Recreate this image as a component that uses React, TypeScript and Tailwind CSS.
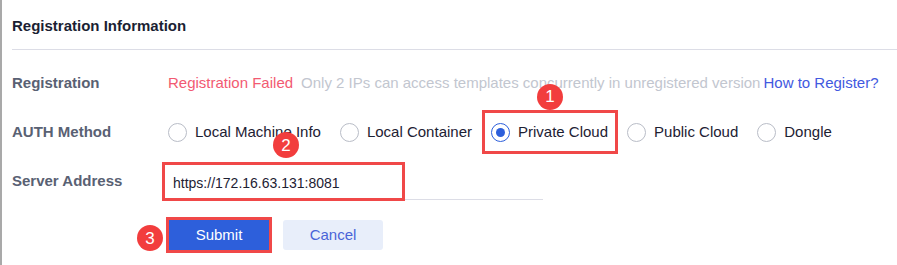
import React from 'react'

const METHODS = ['Local Machine Info', 'Local Container', 'Private Cloud', 'Public Cloud', 'Dongle']

const Badge = ({ n, className }: { n: number; className: string }) => (
  <span
    className={`absolute w-[26px] h-[26px] rounded-full bg-[#f23d3d] text-white text-[17px] leading-none flex items-center justify-center ${className}`}
  >
    {n}
  </span>
)

const App: React.FC = () => {
  const selected = 'Private Cloud'

  return (
    <div className="w-[897px] h-[265px] bg-white border-l-2 border-[#a9a9a9] font-['Liberation_Sans',Arial,sans-serif] text-[15px] overflow-hidden">
      {/* Header */}
      <div className="ml-[10px] h-[50px] pt-[4px] border-b border-[#dcdde6] flex items-center">
        <h2 className="font-bold text-[#1b1f33] text-[15px]">Registration Information</h2>
      </div>

      {/* Registration */}
      <div className="ml-[10px] mt-[21px] h-[24px] flex items-center">
        <span className="w-[156px] font-bold text-[#596173]">Registration</span>
        <span className="text-[#f25a72]">Registration Failed</span>
        <span className="ml-[8px] text-[#c2c6cf]">Only 2 IPs can access templates concurrently in unregistered version</span>
        <span className="ml-[3px] text-[#4259e0]">How to Register?</span>
      </div>

      {/* AUTH method */}
      <div className="ml-[10px] mt-[25px] h-[24px] flex items-center">
        <span className="w-[156px] font-bold text-[#596173]">AUTH Method</span>
        <div className="flex items-center gap-[19px]">
          {METHODS.map(m => {
            const on = m === selected
            return (
              <label key={m} className="relative flex items-center gap-[8px] text-[#1d2133]">
                <span
                  className={`w-[19px] h-[19px] rounded-full border flex items-center justify-center ${
                    on ? 'border-[#2d5fdb] border-[1.5px]' : 'border-[#b9bdc7]'
                  }`}
                >
                  {on && <span className="w-[9px] h-[9px] rounded-full bg-[#2d5fdb]" />}
                </span>
                {m}
                {on && (
                  <>
                    <span className="absolute top-[-11px] bottom-[-11px] left-[-9px] right-[-10px] border-[3px] border-[#f04848]" />
                    <Badge n={1} className="left-[46px] top-[-37px]" />
                  </>
                )}
              </label>
            )
          })}
        </div>
      </div>

      {/* Server address */}
      <div className="ml-[10px] mt-[18px] flex items-center">
        <span className="w-[156px] font-bold text-[#596173]">Server Address</span>
        <div className="relative w-[375px] h-[38px] border-b border-[#dcdde6] flex items-center pl-[5px] pt-[5px] text-[#1d2133] text-[14px]">
          https://172.16.63.131:8081
          <span className="absolute left-[-6px] top-[0px] w-[243px] h-[39px] border-[3px] border-[#f04848]" />
          <Badge n={2} className="left-[105px] top-[-30px]" />
        </div>
      </div>

      {/* Actions */}
      <div className="ml-[167px] mt-[20px] flex items-center gap-[14px]">
        <button className="relative w-[100px] h-[30px] bg-[#2d5fdb] text-white text-[15px]">
          Submit
          <span className="absolute -inset-[3px] border-[3px] border-[#f04848]" />
          <Badge n={3} className="left-[-32px] top-[5px]" />
        </button>
        <button className="w-[100px] h-[30px] rounded-[3px] bg-[#e8eefa] text-[#4a64d8] text-[15px]">Cancel</button>
      </div>
    </div>
  )
}

export default App
